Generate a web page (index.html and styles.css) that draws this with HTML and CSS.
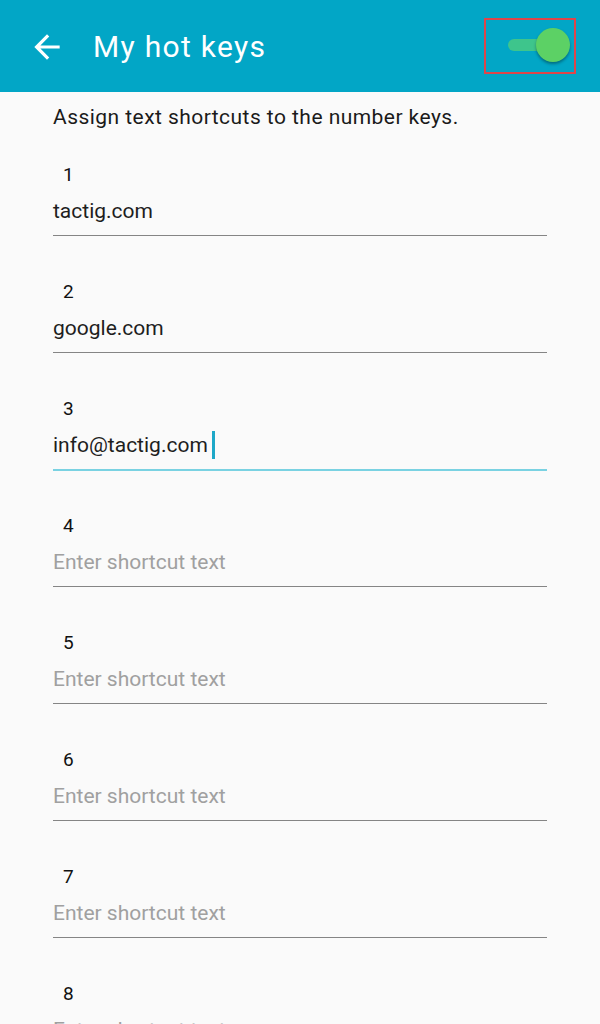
FILE: index.html
```html
<!DOCTYPE html>
<html>
<head>
<meta charset="utf-8">
<link rel="stylesheet" href="styles.css">
</head>
<body>
<div class="appbar">
  <svg class="back" viewBox="0 0 24 24" width="38" height="38"><path fill="#fff" d="M20 11H7.83l5.59-5.59L12 4l-8 8 8 8 1.41-1.41L7.83 13H20v-2z"/></svg>
  <div class="title">My hot keys</div>
  <div class="switch-box">
    <div class="switch">
      <div class="track"></div>
      <div class="thumb"></div>
    </div>
  </div>
</div>
<div class="content">
  <p class="desc">Assign text shortcuts to the number keys.</p>
  <div class="row first"><div class="label">1</div><div class="value">tactig.com</div></div>
  <div class="row"><div class="label">2</div><div class="value">google.com</div></div>
  <div class="row focused"><div class="label">3</div><div class="value">info@tactig.com<span class="cursor"></span></div></div>
  <div class="row"><div class="label">4</div><div class="value hint">Enter shortcut text</div></div>
  <div class="row"><div class="label">5</div><div class="value hint">Enter shortcut text</div></div>
  <div class="row"><div class="label">6</div><div class="value hint">Enter shortcut text</div></div>
  <div class="row"><div class="label">7</div><div class="value hint">Enter shortcut text</div></div>
  <div class="row"><div class="label">8</div><div class="value hint">Enter shortcut text</div></div>
</div>
</body>
</html>
```
FILE: styles.css
```css
html, body {
  margin: 0;
  padding: 0;
  background: #fafafa;
  font-family: Roboto, "Noto Sans", sans-serif;
  height: 1024px;
  overflow: hidden;
}
.appbar {
  height: 92px;
  background: #02a6c6;
  display: flex;
  align-items: center;
  position: relative;
}
.back {
  margin-left: 28px;
  margin-top: 2px;
  flex: none;
}
.title {
  margin-left: 27px;
  color: #fff;
  font-size: 30px;
  letter-spacing: 1.3px;
  line-height: 34px;
  margin-top: 2px;
}
.switch-box {
  margin-left: auto;
  margin-right: 24px;
  width: 88px;
  height: 52px;
  border: 2px solid #e0454a;
  display: flex;
  align-items: center;
}
.switch {
  position: relative;
  width: 70px;
  height: 36px;
  margin-left: 20px;
}
.track {
  position: absolute;
  left: 2px;
  top: 11px;
  width: 52px;
  height: 12px;
  border-radius: 6px;
  background: #3ec58c;
}
.thumb {
  position: absolute;
  left: 30px;
  top: 0;
  width: 34px;
  height: 34px;
  border-radius: 50%;
  background: #5cd165;
  box-shadow: 0 2px 3px rgba(0,0,0,0.35);
}
.content {
  padding: 0 53px;
}
.desc {
  margin: 11px 0 0;
  font-size: 21px;
  letter-spacing: 0.45px;
  line-height: 28px;
  color: #1a1a1a;
}
.row {
  padding: 44px 0 10px;
  border-bottom: 1px solid #858585;
}
.row.first {
  padding-top: 32px;
}
.row.focused {
  border-bottom-color: #7ad2e2;
  box-shadow: 0 1px 0 #7ad2e2;
}
.label {
  padding-left: 10px;
  font-size: 19px;
  line-height: 24px;
  color: #111;
  margin-bottom: 10px;
}
.value {
  font-size: 21px;
  line-height: 28px;
  color: #1e1e1e;
  display: flex;
  align-items: center;
}
.value.hint {
  color: #a0a0a0;
}
.cursor {
  display: inline-block;
  width: 3px;
  height: 28px;
  background: #1ea8c8;
  margin-left: 4px;
}
```
